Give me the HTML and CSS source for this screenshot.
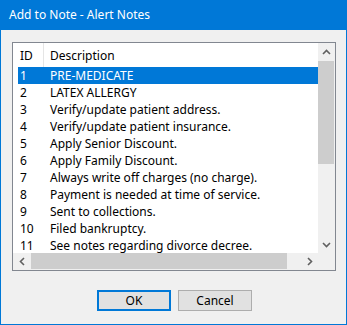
FILE: index.html
```html
<!DOCTYPE html>
<html>
<head>
<meta charset="utf-8">
<link rel="stylesheet" href="styles.css">
</head>
<body>
<div class="window">
  <div class="titlebar">Add to Note - Alert Notes</div>
  <div class="content">
    <div class="listbox">
      <div class="main">
        <div class="view">
          <div class="header">
            <div class="hcol hid">ID</div>
            <div class="hcol hdesc">Description</div>
          </div>
          <div class="row sel"><span class="cid">1</span><span class="cdesc">PRE-MEDICATE</span></div>
          <div class="row"><span class="cid">2</span><span class="cdesc">LATEX ALLERGY</span></div>
          <div class="row"><span class="cid">3</span><span class="cdesc">Verify/update patient address.</span></div>
          <div class="row"><span class="cid">4</span><span class="cdesc">Verify/update patient insurance.</span></div>
          <div class="row"><span class="cid">5</span><span class="cdesc">Apply Senior Discount.</span></div>
          <div class="row"><span class="cid">6</span><span class="cdesc">Apply Family Discount.</span></div>
          <div class="row"><span class="cid">7</span><span class="cdesc">Always write off charges (no charge).</span></div>
          <div class="row"><span class="cid">8</span><span class="cdesc">Payment is needed at time of service.</span></div>
          <div class="row"><span class="cid">9</span><span class="cdesc">Sent to collections.</span></div>
          <div class="row"><span class="cid">10</span><span class="cdesc">Filed bankruptcy.</span></div>
          <div class="row"><span class="cid">11</span><span class="cdesc">See notes regarding divorce decree.</span></div>
        </div>
        <div class="vscroll">
          <div class="arrow"><svg width="9" height="6" viewBox="0 0 9 6"><path d="M1 5 L4.5 1.5 L8 5" fill="none" stroke="#606060" stroke-width="1.6"/></svg></div>
          <div class="vtrack"><div class="vthumb"></div></div>
          <div class="arrow"><svg width="9" height="6" viewBox="0 0 9 6"><path d="M1 1 L4.5 4.5 L8 1" fill="none" stroke="#606060" stroke-width="1.6"/></svg></div>
        </div>
      </div>
      <div class="bottom">
        <div class="hscroll">
          <div class="arrow"><svg width="6" height="9" viewBox="0 0 6 9"><path d="M5 1 L1.5 4.5 L5 8" fill="none" stroke="#606060" stroke-width="1.6"/></svg></div>
          <div class="htrack"><div class="hthumb"></div></div>
          <div class="arrow"><svg width="6" height="9" viewBox="0 0 6 9"><path d="M1 1 L4.5 4.5 L1 8" fill="none" stroke="#606060" stroke-width="1.6"/></svg></div>
        </div>
        <div class="corner"></div>
      </div>
    </div>
    <div class="buttons">
      <button class="btn default">OK</button>
      <button class="btn">Cancel</button>
    </div>
  </div>
</div>
</body>
</html>
```
FILE: styles.css
```css
html, body {
  margin: 0;
  padding: 0;
  background: #f0f0f0;
}
body {
  font-family: "Noto Sans", "Open Sans", sans-serif;
  font-size: 12px;
  color: #000;
}
.window {
  width: 347px;
  height: 325px;
  box-sizing: border-box;
  border: 1px solid #0078d7;
  border-top: none;
  background: #f0f0f0;
  display: flex;
  flex-direction: column;
}
.titlebar {
  height: 30px;
  background: #0078d7;
  color: #fff;
  line-height: 30px;
  padding-left: 8px;
  margin: 0 -1px;
  padding-left: 9px;
  white-space: nowrap;
}
.content {
  padding: 12px 0 0 11px;
}
.listbox {
  width: 324px;
  height: 229px;
  box-sizing: border-box;
  border: 1px solid #828790;
  background: #fff;
  display: flex;
  flex-direction: column;
}
.main {
  display: flex;
  height: 210px;
}
.view {
  flex: 1;
  overflow: hidden;
  padding-left: 5px;
}
.header {
  display: flex;
  height: 24px;
  align-items: stretch;
}
.hcol {
  display: flex;
  align-items: center;
}
.hid {
  width: 23px;
  padding-left: 2px;
  border-right: 1px solid #e5e5e5;
}
.hdesc {
  padding-left: 6px;
}
.row {
  display: flex;
  height: 17px;
  line-height: 17px;
  white-space: nowrap;
}
.row.sel {
  background: #0078d7;
  color: #fff;
}
.cid {
  width: 30px;
  padding-left: 2px;
  flex: none;
}
.vscroll {
  width: 17px;
  background: #f0f0f0;
  display: flex;
  flex-direction: column;
}
.arrow {
  width: 17px;
  height: 17px;
  flex: none;
  display: flex;
  align-items: center;
  justify-content: center;
}
.vtrack {
  flex: 1;
  padding: 1px 1px 0 0;
}
.vthumb {
  height: 103px;
  background: #cdcdcd;
}
.bottom {
  display: flex;
  height: 17px;
}
.hscroll {
  flex: 1;
  background: #f0f0f0;
  display: flex;
}
.htrack {
  flex: 1;
  padding: 0 0 1px 1px;
  display: flex;
}
.hthumb {
  width: 256px;
  background: #cdcdcd;
}
.corner {
  width: 17px;
  background: #f0f0f0;
}
.buttons {
  display: flex;
  justify-content: flex-start;
  gap: 7px;
  padding-left: 85px;
  margin-top: 19px;
}
.btn {
  width: 74px;
  height: 21px;
  box-sizing: border-box;
  background: #e1e1e1;
  border: 1px solid #adadad;
  font-family: "Noto Sans", "Open Sans", sans-serif;
  font-size: 12px;
  color: #000;
  padding: 0;
  margin: 0;
}
.btn.default {
  border: 2px solid #0078d7;
}
```
